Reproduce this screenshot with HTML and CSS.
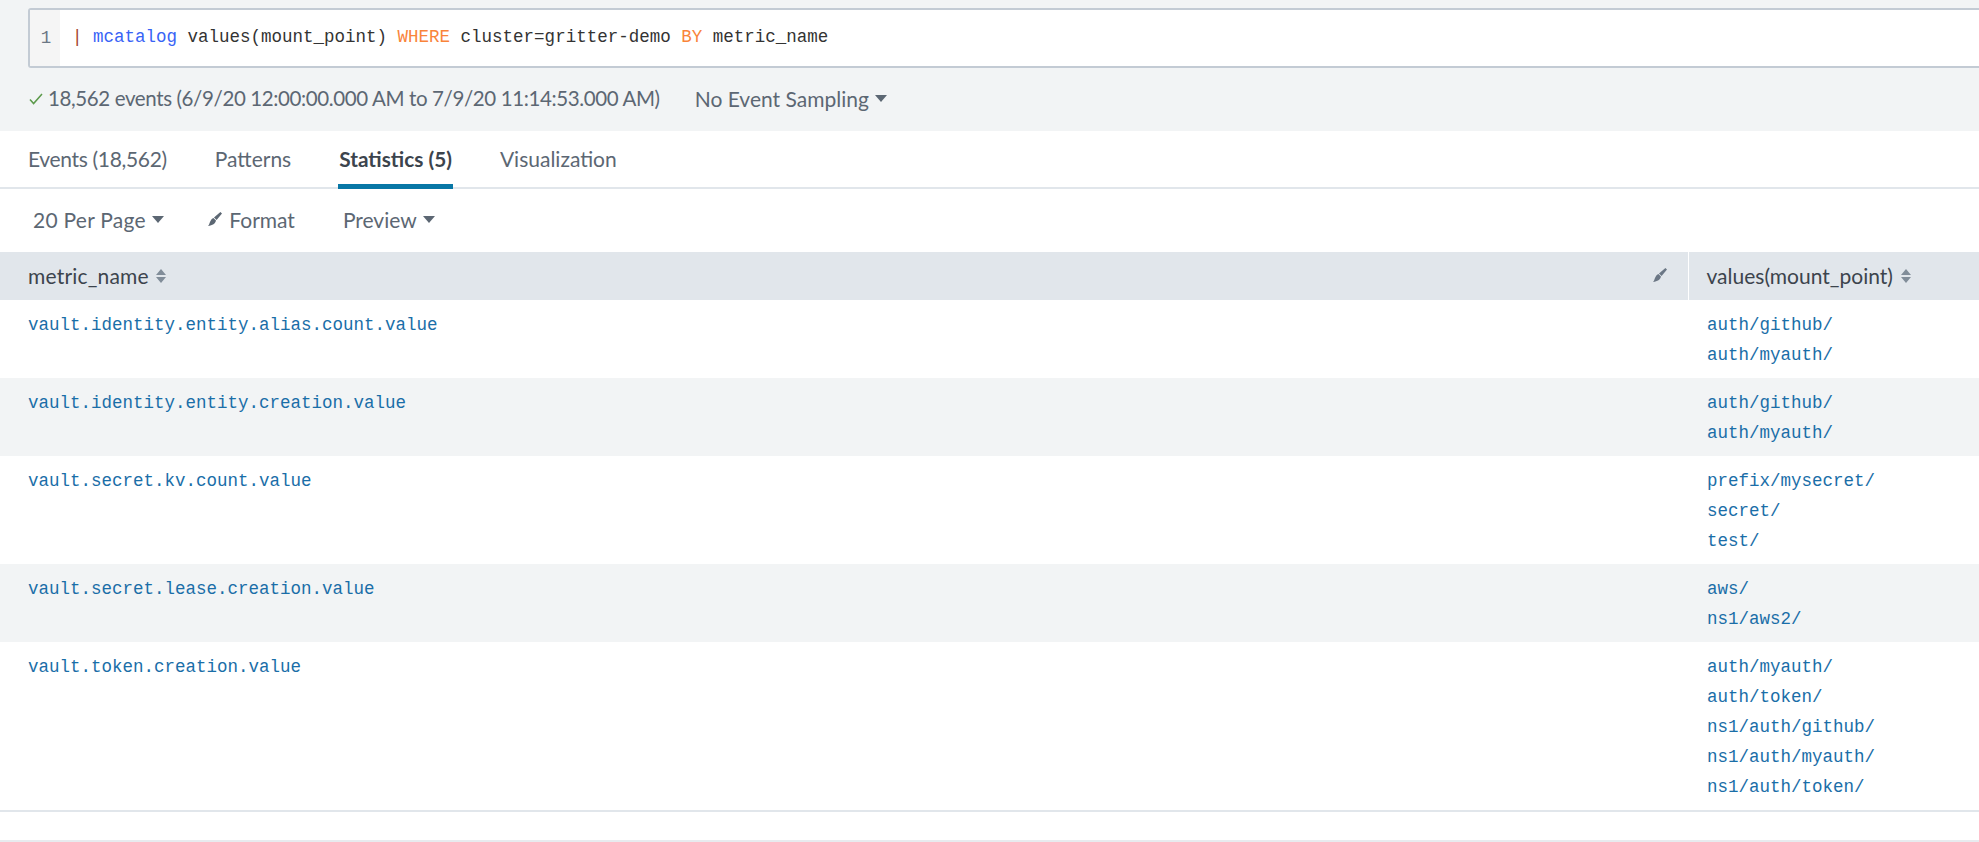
FILE: index.html
```html
<!DOCTYPE html>
<html lang="en">
<head>
<meta charset="utf-8">
<title>Search</title>
<link rel="stylesheet" href="styles.css">
</head>
<body>
<header class="search-area">
  <div class="search-box">
    <div class="gutter">1</div>
    <div class="query"><span class="pipe">|</span> <span class="cmd">mcatalog</span> values(mount_point) <span class="kw">WHERE</span> cluster=gritter-demo <span class="kw">BY</span> metric_name</div>
  </div>
  <div class="status">
    <svg class="check" viewBox="0 0 14 12" width="14" height="12"><path d="M1 6.5 L4.6 10.6 L13 1" fill="none" stroke="#5c9a4b" stroke-width="1.5"/></svg>
    <span class="status-text">18,562 events (6/9/20 12:00:00.000 AM to 7/9/20 11:14:53.000 AM)</span>
    <span class="sampling">No Event Sampling<i class="caret"></i></span>
  </div>
</header>
<nav class="tabs">
  <a class="tab tab-count">Events (18,562)</a>
  <a class="tab">Patterns</a>
  <a class="tab active">Statistics (5)</a>
  <a class="tab">Visualization</a>
</nav>
<div class="toolbar">
  <span class="tool per-page">20 Per Page<i class="caret"></i></span>
  <span class="tool format"><svg class="brush" viewBox="0 0 14 14" width="14" height="14"><path d="M12.4 0 L14 1.6 L8.6 8 L6 5.4 Z M5.4 6 L8 8.6 C7.4 11.4 4.6 13.8 0 14 C2.2 12 1.4 8 5.4 6 Z" fill="#5c6773"/></svg>Format</span>
  <span class="tool preview">Preview<i class="caret"></i></span>
</div>
<table class="results">
  <thead>
    <tr>
      <th class="col-name"><div class="th-inner"><span class="th-label name-label">metric_name<svg class="sort" viewBox="0 0 10 14" width="10" height="14"><path d="M5 0 L10 6 H0 Z M0 8 H10 L5 14 Z" fill="#818d99"/></svg></span><svg class="brush-h" viewBox="0 0 14 14" width="14" height="14"><path d="M12.4 0 L14 1.6 L8.6 8 L6 5.4 Z M5.4 6 L8 8.6 C7.4 11.4 4.6 13.8 0 14 C2.2 12 1.4 8 5.4 6 Z" fill="#6b7785"/></svg></div></th>
      <th class="col-values"><span class="th-label">values(mount_point)<svg class="sort" viewBox="0 0 10 14" width="10" height="14"><path d="M5 0 L10 6 H0 Z M0 8 H10 L5 14 Z" fill="#818d99"/></svg></span></th>
    </tr>
  </thead>
  <tbody>
    <tr>
      <td>vault.identity.entity.alias.count.value</td>
      <td class="val"><div>auth/github/</div><div>auth/myauth/</div></td>
    </tr>
    <tr>
      <td>vault.identity.entity.creation.value</td>
      <td class="val"><div>auth/github/</div><div>auth/myauth/</div></td>
    </tr>
    <tr>
      <td>vault.secret.kv.count.value</td>
      <td class="val"><div>prefix/mysecret/</div><div>secret/</div><div>test/</div></td>
    </tr>
    <tr>
      <td>vault.secret.lease.creation.value</td>
      <td class="val"><div>aws/</div><div>ns1/aws2/</div></td>
    </tr>
    <tr>
      <td>vault.token.creation.value</td>
      <td class="val"><div>auth/myauth/</div><div>auth/token/</div><div>ns1/auth/github/</div><div>ns1/auth/myauth/</div><div>ns1/auth/token/</div></td>
    </tr>
  </tbody>
</table>
<div class="footer-band"></div>
</body>
</html>
```
FILE: styles.css
```css
* { box-sizing: border-box; }
html, body { margin: 0; padding: 0; height: 842px; overflow: hidden; }
body { background: #fff; font-family: "Lato", "Liberation Sans", sans-serif; font-size: 21px; color: #5c6773; }

.search-area { background: #f2f4f5; height: 131px; padding: 8px 0 0 28px; }
.search-box { display: flex; height: 60px; margin-right: -10px; background: #fff; border: 2px solid #c3cbd4; border-radius: 3px; }
.gutter { width: 30px; background: #f5f5f5; color: #6b7785; font-family: "Liberation Mono", monospace; font-size: 17.5px; line-height: 56px; text-align: center; padding-left: 2px; }
.query { padding-left: 12px; font-family: "Liberation Mono", monospace; font-size: 17.5px; line-height: 55px; color: #333; white-space: pre; }
.pipe { color: #a4452c; }
.cmd { color: #3863f6; }
.kw { color: #f9843a; }

.status { display: flex; align-items: center; height: 20px; margin-top: 20px; }
.check { margin: 2px 5px 0 1px; }
.status-text { font-size: 20.5px; letter-spacing: -0.38px; }
.sampling { margin-left: 35px; display: inline-flex; align-items: center; }
.caret { display: inline-block; width: 0; height: 0; margin-left: 6px; border-left: 6px solid transparent; border-right: 6px solid transparent; border-top: 7px solid #5c6773; }

.tabs { display: flex; height: 58px; padding-left: 27px; gap: 46px; border-bottom: 2px solid #e1e6eb; }
.tab { display: block; height: 58px; padding: 16px 1px 0; line-height: 24px; }
.tab-count { letter-spacing: -0.33px; }
.tab.active { color: #3c444d; font-weight: 700; font-size: 20.8px; border-bottom: 5px solid #0877a6; }

.toolbar { display: flex; align-items: center; height: 63px; padding: 0 0 3px 33px; }
.tool { display: inline-flex; align-items: center; }
.per-page { letter-spacing: 0.25px; }
.format { margin-left: 44.5px; }
.preview { margin-left: 48px; }
.brush { margin-right: 7px; }

.results { width: 100%; border-collapse: collapse; table-layout: fixed; }
.results th { background: #e1e6eb; height: 48px; padding: 0 0 2px 28px; text-align: left; font-weight: 400; color: #3c444d; white-space: nowrap; }
.col-name { width: 1688px; }
.results th.col-values { padding-left: 18px; border-left: 1px solid #fff; }
.th-inner { display: flex; align-items: center; justify-content: space-between; padding-right: 21px; }
.th-label { display: inline-flex; align-items: center; }
.name-label { letter-spacing: 0.2px; }
.name-label .sort { margin-left: 7px; }
.sort { margin-left: 8px; margin-top: 2px; }
.results td { padding: 10px 28px 8px; vertical-align: top; font-family: "Liberation Mono", monospace; font-size: 17.5px; line-height: 30px; color: #1a6ea8; white-space: nowrap; }
.results td.val { padding-left: 19px; padding-right: 0; }
.results tbody tr:nth-child(even) td { background: #f2f4f5; }

.footer-band { height: 32px; border-top: 2px solid #e1e6eb; border-bottom: 2px solid #e8ebef; }
```
